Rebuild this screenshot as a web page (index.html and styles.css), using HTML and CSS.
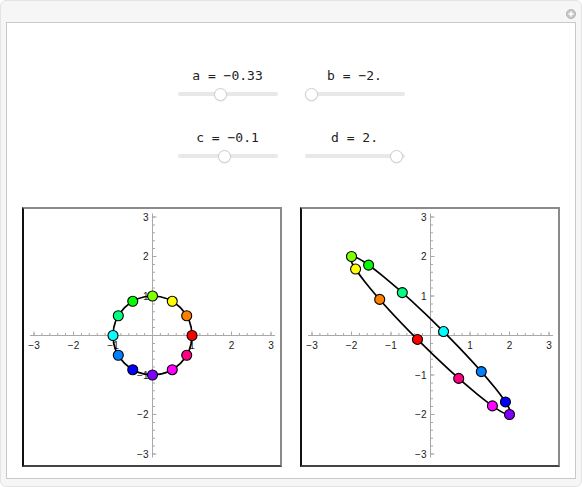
FILE: index.html
```html
<!DOCTYPE html>
<html>
<head>
<meta charset="utf-8">
<link rel="stylesheet" href="styles.css">
</head>
<body>
<div class="window">
  <div class="header">
    <svg class="plus-icon" width="10" height="10" viewBox="0 0 10 10">
      <circle cx="5" cy="5" r="4.6" fill="#c6c6c6" stroke="#adadad" stroke-width="0.8"/>
      <path d="M5 2.4V7.6M2.4 5H7.6" stroke="#fff" stroke-width="1.6"/>
    </svg>
  </div>
  <div class="panel">
    <div class="controls">
      <div class="control">
        <div class="label">a = −0.33</div>
        <div class="track"><div class="thumb" style="left:36px"></div></div>
      </div>
      <div class="control">
        <div class="label">b = −2.</div>
        <div class="track"><div class="thumb" style="left:0.5px"></div></div>
      </div>
      <div class="control">
        <div class="label">c = −0.1</div>
        <div class="track"><div class="thumb" style="left:40.9px"></div></div>
      </div>
      <div class="control">
        <div class="label">d = 2.</div>
        <div class="track"><div class="thumb" style="left:85.5px"></div></div>
      </div>
    </div>
    <div class="plots">
      <div class="plot">
        <svg width="256" height="256" viewBox="0 0 256 256">
          <g transform="translate(0.5 0.5)">
            <g class="axes">
              <line x1="5.5" y1="126" x2="250.5" y2="126"/>
              <line x1="128" y1="4" x2="128" y2="248"/>
              <line class="minor" x1="9" y1="124.75" x2="247.5" y2="124.75"/>
              <line class="minor" x1="129.25" y1="7" x2="129.25" y2="245.5"/>
              <path class="major" d="M9.5 126v-4M49 126v-4M88.5 126v-4M167.5 126v-4M207 126v-4M246.5 126v-4M128 7.5h4M128 47h4M128 86.5h4M128 165.5h4M128 205h4M128 244.5h4"/>
            </g>
            <g class="ticklabels">
              <text x="9.5" y="139.5" text-anchor="middle">−3</text>
              <text x="49" y="139.5" text-anchor="middle">−2</text>
              <text x="88.5" y="139.5" text-anchor="middle">−1</text>
              <text x="167.5" y="139.5" text-anchor="middle">1</text>
              <text x="207" y="139.5" text-anchor="middle">2</text>
              <text x="246.5" y="139.5" text-anchor="middle">3</text>
              <text x="124" y="11.1" text-anchor="end">3</text>
              <text x="124" y="50.6" text-anchor="end">2</text>
              <text x="124" y="90.1" text-anchor="end">1</text>
              <text x="124" y="169.1" text-anchor="end">−1</text>
              <text x="124" y="208.6" text-anchor="end">−2</text>
              <text x="124" y="248.1" text-anchor="end">−3</text>
            </g>
            <circle class="curve" r="1" transform="matrix(39.5 0 0 -39.5 128 126)"/>
            <g class="pts">
              <circle cx="167.5" cy="126" r="5" fill="hsl(0,100%,50%)"/>
              <circle cx="162.21" cy="106.25" r="5" fill="hsl(30,100%,50%)"/>
              <circle cx="147.75" cy="91.79" r="5" fill="hsl(60,100%,50%)"/>
              <circle cx="128" cy="86.5" r="5" fill="hsl(90,100%,50%)"/>
              <circle cx="108.25" cy="91.79" r="5" fill="hsl(120,100%,50%)"/>
              <circle cx="93.79" cy="106.25" r="5" fill="hsl(150,100%,50%)"/>
              <circle cx="88.5" cy="126" r="5" fill="hsl(180,100%,50%)"/>
              <circle cx="93.79" cy="145.75" r="5" fill="hsl(210,100%,50%)"/>
              <circle cx="108.25" cy="160.21" r="5" fill="hsl(240,100%,50%)"/>
              <circle cx="128" cy="165.5" r="5" fill="hsl(270,100%,50%)"/>
              <circle cx="147.75" cy="160.21" r="5" fill="hsl(300,100%,50%)"/>
              <circle cx="162.21" cy="145.75" r="5" fill="hsl(330,100%,50%)"/>
            </g>
          </g>
        </svg>
      </div>
      <div class="plot">
        <svg width="256" height="256" viewBox="0 0 256 256">
          <g transform="translate(0.5 0.5)">
            <g class="axes">
              <line x1="5.5" y1="126" x2="250.5" y2="126"/>
              <line x1="128" y1="4" x2="128" y2="248"/>
              <line class="minor" x1="9" y1="124.75" x2="247.5" y2="124.75"/>
              <line class="minor" x1="129.25" y1="7" x2="129.25" y2="245.5"/>
              <path class="major" d="M9.5 126v-4M49 126v-4M88.5 126v-4M167.5 126v-4M207 126v-4M246.5 126v-4M128 7.5h4M128 47h4M128 86.5h4M128 165.5h4M128 205h4M128 244.5h4"/>
            </g>
            <g class="ticklabels">
              <text x="9.5" y="139.5" text-anchor="middle">−3</text>
              <text x="49" y="139.5" text-anchor="middle">−2</text>
              <text x="88.5" y="139.5" text-anchor="middle">−1</text>
              <text x="167.5" y="139.5" text-anchor="middle">1</text>
              <text x="207" y="139.5" text-anchor="middle">2</text>
              <text x="246.5" y="139.5" text-anchor="middle">3</text>
              <text x="124" y="11.1" text-anchor="end">3</text>
              <text x="124" y="50.6" text-anchor="end">2</text>
              <text x="124" y="90.1" text-anchor="end">1</text>
              <text x="124" y="169.1" text-anchor="end">−1</text>
              <text x="124" y="208.6" text-anchor="end">−2</text>
              <text x="124" y="248.1" text-anchor="end">−3</text>
            </g>
            <circle class="curve" r="1" transform="matrix(-13.035 3.95 -79 -79 128 126)"/>
            <g class="pts">
              <circle cx="114.97" cy="129.95" r="5" fill="hsl(0,100%,50%)"/>
              <circle cx="77.21" cy="89.92" r="5" fill="hsl(30,100%,50%)"/>
              <circle cx="53.07" cy="59.56" r="5" fill="hsl(60,100%,50%)"/>
              <circle cx="49" cy="47" r="5" fill="hsl(90,100%,50%)"/>
              <circle cx="66.1" cy="55.61" r="5" fill="hsl(120,100%,50%)"/>
              <circle cx="99.79" cy="83.08" r="5" fill="hsl(150,100%,50%)"/>
              <circle cx="141.04" cy="122.05" r="5" fill="hsl(180,100%,50%)"/>
              <circle cx="178.79" cy="162.08" r="5" fill="hsl(210,100%,50%)"/>
              <circle cx="202.93" cy="192.44" r="5" fill="hsl(240,100%,50%)"/>
              <circle cx="207" cy="205" r="5" fill="hsl(270,100%,50%)"/>
              <circle cx="189.9" cy="196.39" r="5" fill="hsl(300,100%,50%)"/>
              <circle cx="156.21" cy="168.92" r="5" fill="hsl(330,100%,50%)"/>
            </g>
          </g>
        </svg>
      </div>
    </div>
  </div>
</div>
</body>
</html>
```
FILE: styles.css
```css
html, body {
  margin: 0;
  padding: 0;
  background: #ffffff;
}
.window {
  width: 582px;
  height: 487px;
  box-sizing: border-box;
  border: 1px solid #e3e3e3;
  border-radius: 6px;
  background: #f6f6f6;
  padding: 0 5px;
}
.header {
  height: 21px;
  box-sizing: border-box;
  padding-top: 8px;
  display: flex;
  justify-content: flex-end;
  align-items: flex-start;
}
.plus-icon {
  display: block;
}
.panel {
  background: #ffffff;
  border: 1px solid #c9c9c9;
  padding: 45px 0 11px;
  display: flex;
  flex-direction: column;
  align-items: center;
}
.controls {
  display: grid;
  grid-template-columns: 100px 100px;
  column-gap: 27px;
  row-gap: 30px;
}
.control {
  display: flex;
  flex-direction: column;
  align-items: stretch;
  gap: 4px;
}
.label {
  font-family: "DejaVu Sans Mono", "Liberation Mono", monospace;
  font-size: 13px;
  line-height: 16px;
  height: 16px;
  color: #222;
  text-align: center;
  white-space: pre;
}
.track {
  position: relative;
  height: 12px;
}
.track::before {
  content: "";
  position: absolute;
  left: 0;
  right: 0;
  top: 4px;
  height: 4px;
  border-radius: 2px;
  background: #e8e8e8;
}
.thumb {
  position: absolute;
  top: -0.5px;
  width: 11px;
  height: 11px;
  border-radius: 50%;
  background: #ffffff;
  border: 1px solid #cfcfcf;
  box-shadow: 0 0.5px 1px rgba(0,0,0,0.12);
}
.plots {
  margin-top: 45px;
  display: flex;
  gap: 18px;
}
.plot {
  width: 256px;
  height: 256px;
  border-top: 2px solid #8a8a8a;
  border-right: 2px solid #8a8a8a;
  border-left: 2px solid #111;
  border-bottom: 2px solid #444;
}
.plot svg {
  display: block;
}
.axes line, .axes path {
  stroke: #a8a8a8;
  stroke-width: 1;
  fill: none;
}
.axes .minor {
  stroke-width: 2.5;
  stroke-dasharray: 1 6.9;
}
.ticklabels text {
  font-family: "Liberation Sans", Arial, sans-serif;
  font-size: 10px;
  fill: #1a1a1a;
}
.curve {
  fill: none;
  stroke: #000;
  stroke-width: 1.7;
  vector-effect: non-scaling-stroke;
}
.pts circle {
  stroke: #000;
  stroke-width: 1.1;
}
```
